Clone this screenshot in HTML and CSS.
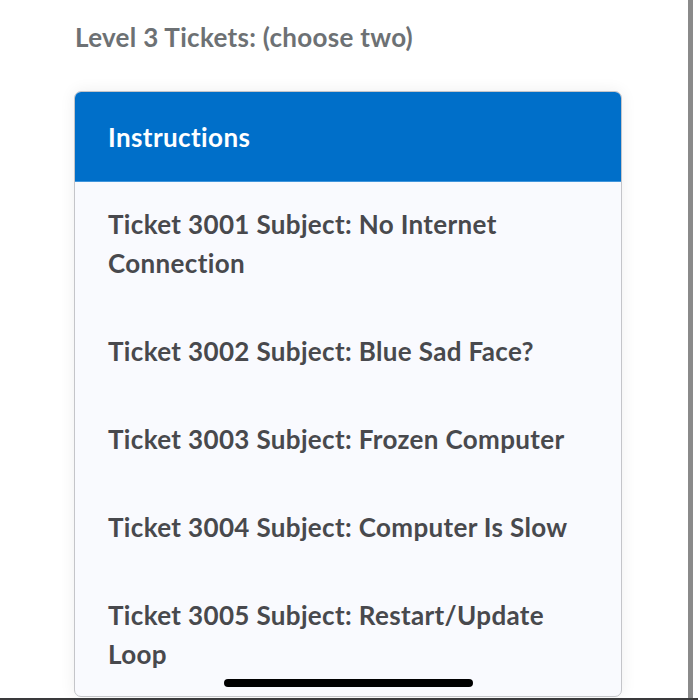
FILE: index.html
```html
<!DOCTYPE html>
<html>
<head>
<meta charset="utf-8">
<link rel="stylesheet" href="styles.css">
</head>
<body>
<div class="page">
  <h1 class="title">Level 3 Tickets: (choose two)</h1>
  <div class="card">
    <div class="card-header">Instructions</div>
    <div class="card-body">
      <p class="ticket">Ticket 3001 Subject: No Internet Connection</p>
      <p class="ticket">Ticket 3002 Subject: Blue Sad Face?</p>
      <p class="ticket">Ticket 3003 Subject: Frozen Computer</p>
      <p class="ticket">Ticket 3004 Subject: Computer Is Slow</p>
      <p class="ticket">Ticket 3005 Subject: Restart/Update Loop</p>
    </div>
  </div>
</div>
<div class="scrollbar"></div>
<div class="home-indicator"></div>
<div class="bottom-edge"></div>
</body>
</html>
```
FILE: styles.css
```css
html, body {
  margin: 0;
  padding: 0;
  background: #ffffff;
  width: 698px;
  height: 700px;
  overflow: hidden;
}
body {
  position: relative;
  font-family: Lato, "Noto Sans", sans-serif;
}
.page {
  padding: 16px 0 0 74px;
}
.title {
  margin: 0 0 0 1px;
  font-size: 26px;
  letter-spacing: 0.3px;
  line-height: 42px;
  font-weight: 700;
  color: #6d7174;
}
.card {
  margin-top: 33px;
  width: 546px;
  height: 604px;
  border: 1px solid #c4c5c9;
  border-radius: 7px;
  background: #f9fafe;
  box-shadow: 0 0 16px rgba(0, 0, 0, 0.07);
  overflow: hidden;
}
.card-header {
  height: 89px;
  background: #006fc9;
  color: #ffffff;
  font-size: 26px;
  letter-spacing: 0.4px;
  font-weight: 700;
  display: flex;
  align-items: center;
  padding-left: 33px;
  border-bottom: 1px solid #3f95dc;
}
.card-body {
  padding: 23px 40px 0 33px;
  display: flex;
  flex-direction: column;
  gap: 49px;
}
.ticket {
  margin: 0;
  font-size: 26px;
  letter-spacing: 0.35px;
  line-height: 39px;
  font-weight: 700;
  color: #48494d;
}
.scrollbar {
  position: absolute;
  top: 0;
  left: 688px;
  width: 5px;
  height: 698px;
  background: #8a8a8a;
}
.home-indicator {
  position: absolute;
  left: 224px;
  top: 679px;
  width: 249px;
  height: 8px;
  border-radius: 4px;
  background: #000000;
}
.bottom-edge {
  position: absolute;
  left: 0;
  top: 698px;
  width: 698px;
  height: 2px;
  background: #3a3a3c;
}
```
